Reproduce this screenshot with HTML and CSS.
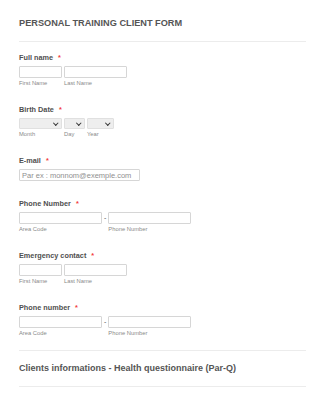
FILE: index.html
```html
<!DOCTYPE html>
<html lang="en">
<head>
  <meta charset="UTF-8" />
  <meta name="viewport" content="width=device-width, initial-scale=1.0"/>
  <title>Personal Training Client Form</title>
  <link rel="stylesheet" href="styles.css">
</head>
<body>

  <div class="form">
    <div class="form-header">
      <h1>PERSONAL TRAINING CLIENT FORM</h1>
    </div>

    <div class="field">
      <label class="field-label">Full name <span class="req">*</span></label>
      <div class="inputs">
        <div class="sub">
          <input class="box w-first" type="text">
          <span class="sublabel">First Name</span>
        </div>
        <div class="sub">
          <input class="box w-last" type="text">
          <span class="sublabel">Last Name</span>
        </div>
      </div>
    </div>

    <div class="field">
      <label class="field-label">Birth Date <span class="req">*</span></label>
      <div class="inputs">
        <div class="sub">
          <div class="select w-month"><span class="chev"></span></div>
          <span class="sublabel">Month</span>
        </div>
        <div class="sub">
          <div class="select w-day"><span class="chev"></span></div>
          <span class="sublabel">Day</span>
        </div>
        <div class="sub">
          <div class="select w-year"><span class="chev"></span></div>
          <span class="sublabel">Year</span>
        </div>
      </div>
    </div>

    <div class="field">
      <label class="field-label">E-mail <span class="req">*</span></label>
      <div class="inputs">
        <input class="box w-email" type="text" placeholder="Par ex : monnom@exemple.com">
      </div>
    </div>

    <div class="field">
      <label class="field-label">Phone Number <span class="req">*</span></label>
      <div class="inputs">
        <div class="sub">
          <input class="box w-phone" type="text">
          <span class="sublabel">Area Code</span>
        </div>
        <span class="dash">-</span>
        <div class="sub">
          <input class="box w-phone" type="text">
          <span class="sublabel">Phone Number</span>
        </div>
      </div>
    </div>

    <div class="field">
      <label class="field-label">Emergency contact <span class="req">*</span></label>
      <div class="inputs">
        <div class="sub">
          <input class="box w-first" type="text">
          <span class="sublabel">First Name</span>
        </div>
        <div class="sub">
          <input class="box w-last" type="text">
          <span class="sublabel">Last Name</span>
        </div>
      </div>
    </div>

    <div class="field last">
      <label class="field-label">Phone number <span class="req">*</span></label>
      <div class="inputs">
        <div class="sub">
          <input class="box w-phone" type="text">
          <span class="sublabel">Area Code</span>
        </div>
        <span class="dash">-</span>
        <div class="sub">
          <input class="box w-phone" type="text">
          <span class="sublabel">Phone Number</span>
        </div>
      </div>
    </div>

    <div class="section-header">
      <h2>Clients informations - Health questionnaire (Par-Q)</h2>
    </div>
  </div>

</body>
</html>
```

FILE: styles.css
```css
body {
  margin: 0;
  background-color: #ffffff;
  font-family: 'Liberation Sans', Arial, sans-serif;
  color: #555555;
}

.form {
  padding: 0 19px;
}

.form-header {
  padding-top: 18px;
  padding-bottom: 12px;
  border-bottom: 1px solid #ececec;
}

h1 {
  margin: 0;
  font-size: 9.2px;
  line-height: 11px;
  font-weight: bold;
  color: #555555;
}

.field {
  padding-top: 11px;
  padding-bottom: 7px;
}

.field-label {
  display: block;
  font-size: 7.3px;
  line-height: 10px;
  font-weight: bold;
  color: #4f4f4f;
  margin-bottom: 3px;
}

.req {
  color: #f23a3c;
  margin-left: 3px;
}

.inputs {
  display: flex;
  align-items: flex-start;
  gap: 2px;
}

.sub {
  display: flex;
  flex-direction: column;
}

.box {
  box-sizing: border-box;
  height: 12px;
  margin: 0;
  padding: 0 2px;
  border: 1px solid #d6d6d6;
  border-radius: 1px;
  background-color: #ffffff;
  font-family: inherit;
  font-size: 7.5px;
  color: #555555;
}

.box::placeholder {
  color: #8f8f8f;
}

.w-first { width: 43px; }
.w-last { width: 63px; }
.w-email { width: 121px; }
.w-phone { width: 83px; }

.select {
  box-sizing: border-box;
  position: relative;
  height: 11px;
  border: 1px solid #e0e0e0;
  border-radius: 1px;
  background-color: #eeeeee;
}

.w-month { width: 43px; }
.w-day { width: 21px; }
.w-year { width: 27px; }

.chev {
  position: absolute;
  right: 4px;
  top: 2px;
  width: 2.5px;
  height: 2.5px;
  border-right: 1.5px solid #333333;
  border-bottom: 1.5px solid #333333;
  transform: rotate(45deg);
}

.sublabel {
  margin-top: 1px;
  font-size: 5.8px;
  line-height: 8px;
  color: #8a8a8a;
}

.dash {
  font-size: 7px;
  line-height: 12px;
  color: #555555;
}

.field.last {
  padding-bottom: 13px;
}

.section-header {
  border-top: 1px solid #ececec;
  border-bottom: 1px solid #ececec;
  padding: 11px 0 12px;
}

h2 {
  margin: 0;
  font-size: 9px;
  line-height: 12px;
  font-weight: bold;
  color: #555555;
}
```
